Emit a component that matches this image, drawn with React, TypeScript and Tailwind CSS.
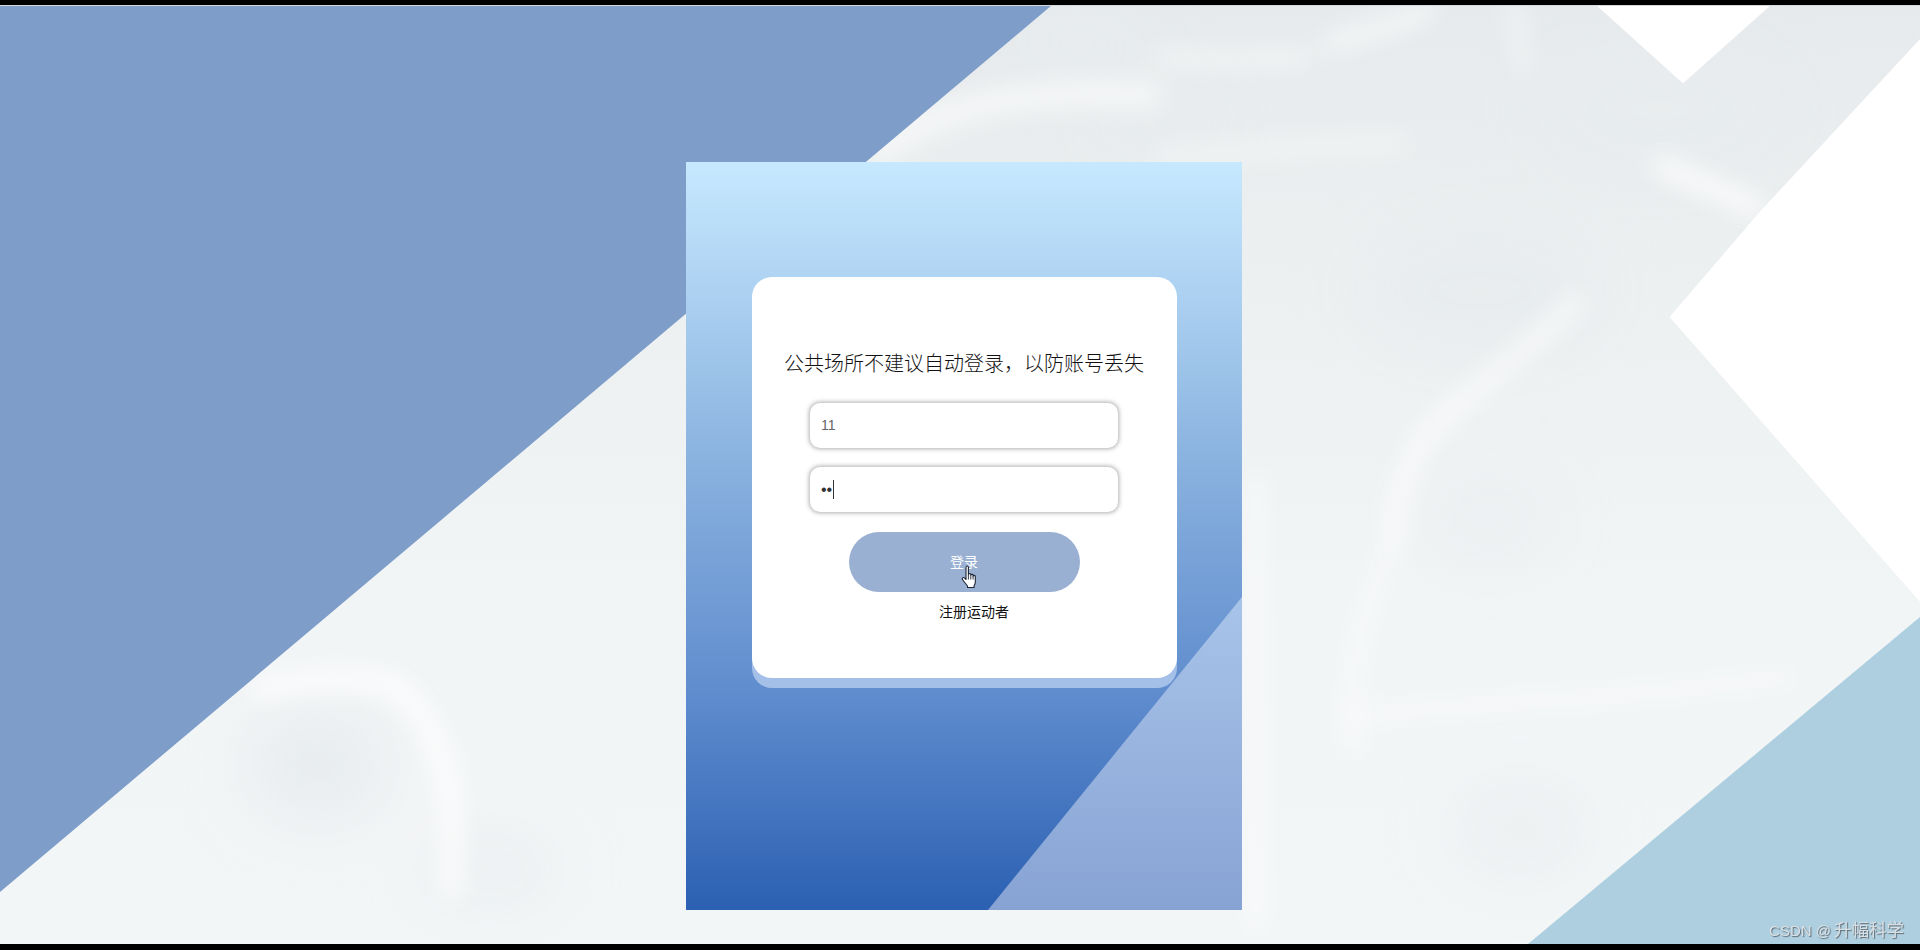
const Backdrop = () => {
  return (
    <svg className="absolute inset-0 h-full w-full" viewBox="0 6 1920 938" preserveAspectRatio="none">
      <defs>
        <linearGradient id="paper" x1="0" y1="0" x2="0" y2="1">
          <stop offset="0" stopColor="#e6eaec" />
          <stop offset="0.3" stopColor="#edf0f1" />
          <stop offset="0.65" stopColor="#f2f5f6" />
          <stop offset="1" stopColor="#f3f6f7" />
        </linearGradient>
        <filter id="soft" x="-30%" y="-30%" width="160%" height="160%">
          <feGaussianBlur stdDeviation="12" />
        </filter>
        <filter id="softer" x="-40%" y="-40%" width="180%" height="180%">
          <feGaussianBlur stdDeviation="30" />
        </filter>
      </defs>
      <rect x="0" y="0" width="1920" height="950" fill="url(#paper)" />

      {/* darker water patches */}
      <g filter="url(#softer)" fill="#e8ecee">
        <ellipse cx="317" cy="765" rx="70" ry="55" />
        <ellipse cx="1077" cy="40" rx="70" ry="30" />
        <ellipse cx="1150" cy="125" rx="50" ry="35" />
        <ellipse cx="1660" cy="110" rx="120" ry="60" />
        <ellipse cx="1480" cy="290" rx="120" ry="60" />
        <ellipse cx="1490" cy="520" rx="60" ry="40" opacity="0.5" />
        <ellipse cx="1520" cy="830" rx="70" ry="50" opacity="0.5" />
        <ellipse cx="490" cy="870" rx="70" ry="40" opacity="0.5" />
      </g>

      {/* caustic lines */}
      <g filter="url(#soft)" fill="none" stroke="#ffffff" strokeLinecap="round" strokeLinejoin="round">
        <path d="M260 690 C310 676 370 676 400 690 C430 720 446 760 450 800 L452 890" strokeWidth="16" />
        <path d="M1160 157 C1240 150 1320 145 1402 143" strokeWidth="14" opacity="0.5" />
        <path d="M1660 165 L1756 207" strokeWidth="16" />
        <path d="M1160 57 C1210 60 1260 60 1305 57" strokeWidth="14" opacity="0.6" />
        <path d="M1330 43 C1360 35 1400 25 1427 10" strokeWidth="16" opacity="0.7" />
        <path d="M1514 7 L1523 67" strokeWidth="14" opacity="0.5" />
        <path d="M1577 300 C1530 350 1470 390 1427 433 C1410 460 1395 500 1393 540" strokeWidth="16" opacity="0.7" />
        <path d="M1393 540 C1370 600 1345 650 1354 750" strokeWidth="14" opacity="0.5" />
        <path d="M1344 716 C1420 710 1480 705 1548 700 C1640 695 1720 685 1790 677" strokeWidth="14" opacity="0.4" />
        <path d="M880 150 C950 100 1030 90 1150 95" strokeWidth="26" opacity="0.6" />
        <path d="M1256 480 L1256 925" strokeWidth="14" opacity="0.6" />
      </g>

      <g fill="#ffffff" stroke="#ffffff" strokeWidth="2" strokeLinejoin="round">
        <polygon points="1592,0 1683,82 1775,0" />
        <polygon points="1925,35 1761,212 1671,317 1925,606" />
      </g>
      <polygon points="0,0 1058,0 0,892" fill="#7e9dc9" />
      <polygon points="1920,617 1528,944 1920,944" fill="#adcfe0" />
    </svg>
  );
};

const HandCursor = () => {
  return (
    <svg className="absolute left-[112px] top-[33px] h-[24px] w-[18px]" viewBox="0 0 18 24">
      <path
        d="M5 2c0-1.4 2.4-1.4 2.4 0v7.5c0-1.3 2.4-1.3 2.4 0v.8c0-1.2 2.3-1.2 2.3 0v.9c0-1.1 2.2-1.1 2.2.2v5.6c0 1.5-.5 2.6-1.2 3.6v1.9H6.5v-1.5L1.4 14.5c-.8-1 .8-2.6 2-1.6L5 14.5z"
        fill="#ffffff"
        stroke="#1c2436"
        strokeWidth="1.1"
        strokeLinejoin="round"
      />
      <path d="M7.4 9.5v5M9.8 10.3v4.2M12.1 11.2v3.3" fill="none" stroke="#1c2436" strokeWidth="0.9" />
    </svg>
  );
};

const App = () => {
  return (
    <div className="flex h-screen flex-col overflow-hidden bg-black pt-[5px] font-['Liberation_Sans','Noto_Sans_CJK_SC',sans-serif]">
      <main className="relative flex h-[939px] shrink-0 justify-center border-t border-[#d5dadd] pl-[8px] pt-[156px]">
        <Backdrop />

        <section className="relative flex h-[748px] w-[556px] justify-center bg-[linear-gradient(to_bottom,#c7e9ff_0%,#8eb6e1_37%,#5e8bcd_72%,#2b60b2_100%)] pt-[115px]">
          <svg className="absolute inset-0 h-full w-full" viewBox="0 0 556 748">
            <defs>
              <linearGradient id="sheen" x1="0" y1="0" x2="0" y2="1">
                <stop offset="0" stopColor="#a9c4e9" />
                <stop offset="1" stopColor="#87a3d4" />
              </linearGradient>
            </defs>
            <polygon points="302,748 556,435 556,748" fill="url(#sheen)" />
          </svg>

          <div className="relative flex h-[401px] w-[425px] flex-col items-center rounded-[20px] bg-white pt-[73px] shadow-[0_10px_0_#a5c0e8]">
            <h1 className="text-[20px] font-light leading-[28px] text-[#111111]">
              公共场所不建议自动登录，以防账号丢失
            </h1>

            <div className="mt-[25px] flex h-[45px] w-[308px] items-center rounded-[10px] bg-white px-[11px] text-[14px] text-[#666666] shadow-[0_0_4px_1px_rgba(110,110,110,0.55)]">
              11
            </div>
            <div className="mt-[19px] flex h-[45px] w-[308px] items-center rounded-[10px] bg-white px-[11px] text-[16px] text-[#333333] shadow-[0_0_4px_1px_rgba(110,110,110,0.55)]">
              ••
              <span className="ml-px inline-block h-[19px] w-px bg-[#333333]" />
            </div>

            <button className="relative mt-[20px] flex h-[60px] w-[231px] shrink-0 items-center justify-center rounded-full bg-[#9ab0d3] text-[14px] text-white">
              登录
              <HandCursor />
            </button>

            <a className="mt-[10px] pl-[20px] text-[14px] leading-[20px] text-[#111111]">注册运动者</a>
          </div>
        </section>

        <p className="absolute bottom-[1px] right-[16px] flex items-baseline gap-[3px] text-[#d9dfe3] [text-shadow:1px_1px_1px_#5f6b75]">
          <span className="text-[15px]">CSDN @</span>
          <span className="text-[17.5px]">升幅科学</span>
        </p>
      </main>
    </div>
  );
};

export default App;
